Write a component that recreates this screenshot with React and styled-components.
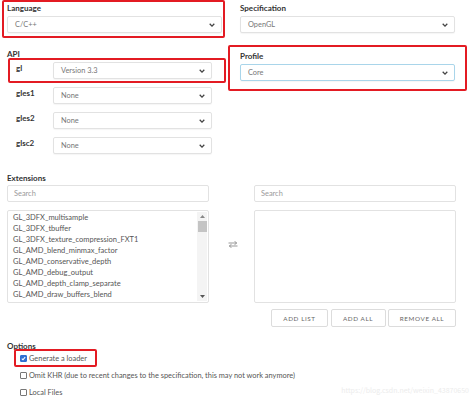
import styled, { createGlobalStyle } from 'styled-components';

const GlobalStyle = createGlobalStyle`
  html, body {
    margin: 0;
    padding: 0;
    background: #fff;
  }
  body {
    font-family: Lato, "Open Sans", sans-serif;
    color: #333;
    width: 474px;
    height: 399px;
    overflow: hidden;
  }
  * { box-sizing: border-box; }
`;

const RED = '#e31b23';

const Page = styled.div`
  position: relative;
  width: 474px;
  height: 399px;
  padding: 3px 0 0 7px;
`;

const TopGrid = styled.div`
  display: grid;
  grid-template-columns: 215px 215px;
  column-gap: 18px;
  align-items: start;
`;

const Column = styled.div`
  display: flex;
  flex-direction: column;
`;

// red annotation frame drawn over a block
const Highlight = styled.div`
  position: relative;
  margin-top: ${p => p.$mt || 0}px;
  ${p => p.$w && `width: ${p.$w}px;`}
  &::after {
    content: '';
    position: absolute;
    top: ${p => p.$t}px;
    left: ${p => p.$l}px;
    right: ${p => p.$r}px;
    bottom: ${p => p.$b}px;
    border: 2.5px solid ${RED};
    border-radius: 2px;
    pointer-events: none;
  }
`;

const Group = styled.div`
  display: flex;
  flex-direction: column;
  margin-top: ${p => p.$mt || 0}px;
`;

const Label = styled.div`
  font-size: 8px;
  line-height: 10px;
  height: 10px;
  font-weight: 700;
  color: #333;
`;

const SelectBox = styled.div`
  display: flex;
  align-items: center;
  justify-content: space-between;
  margin-top: ${p => p.$mt ?? 3}px;
  height: 17px;
  width: ${p => p.$w ? `${p.$w}px` : '100%'};
  padding: 0 6px 0 7px;
  border: 1px solid ${p => p.$focus ? '#a9d5ea' : '#e2e2e2'};
  border-radius: 2px;
  background: #fff;
  box-shadow: 0 1px 1px rgba(0,0,0,0.04);
  font-size: 7.4px;
  color: #777;
`;

const Chevron = () => (
  <svg width="6" height="4" viewBox="0 0 6 4">
    <path d="M0.7 0.8 L3 3.1 L5.3 0.8" fill="none" stroke="#444" strokeWidth="1.3" />
  </svg>
);

const Select = ({ value, ...rest }) => (
  <SelectBox {...rest}>
    <span>{value}</span>
    <Chevron />
  </SelectBox>
);

const ApiRows = styled.div`
  display: flex;
  flex-direction: column;
  gap: 7px;
  margin-top: 3px;
`;

const ApiRow = styled.div`
  display: flex;
  align-items: flex-start;
  height: 18px;
  padding-left: 9px;
`;

const RowLabel = styled.div`
  width: 37px;
  font-size: 8px;
  font-weight: 700;
  line-height: 10px;
  padding-top: 1px;
  color: #333;
`;

const ExtGrid = styled.div`
  display: grid;
  grid-template-columns: 202px 45px 202px;
  margin-top: 2px;
`;

const Search = styled.div`
  height: 17px;
  border: 1px solid #e2e2e2;
  border-radius: 2px;
  padding-left: 6px;
  font-size: 7.4px;
  line-height: 15px;
  color: #9a9a9a;
`;

const ListBox = styled.div`
  display: flex;
  margin-top: 8px;
  height: 93px;
  border: 1px solid #e2e2e2;
  border-radius: 2px;
  overflow: hidden;
`;

const Items = styled.div`
  flex: 1;
  padding-top: 1px;
  overflow: hidden;
`;

const Item = styled.div`
  font-size: 7.5px;
  line-height: 11px;
  padding-left: 5px;
  color: #555;
  white-space: nowrap;
  overflow: hidden;
`;

const ScrollTrack = styled.div`
  width: 10px;
  display: flex;
  flex-direction: column;
  align-items: center;
  background: #f4f4f4;
  margin: 1px 1px 1px 0;
`;

const ScrollArrow = styled.div`
  height: 9px;
  display: flex;
  align-items: center;
  justify-content: center;
`;

const Thumb = styled.div`
  width: 9px;
  height: 11px;
  background: #c4c4c4;
`;

const Spacer = styled.div`
  flex: 1;
`;

const Middle = styled.div`
  display: flex;
  align-items: flex-start;
  justify-content: center;
  padding-top: 56px;
  padding-left: 2px;
`;

const ButtonRow = styled.div`
  display: flex;
  justify-content: flex-end;
  gap: 2.5px;
  margin-top: 6px;
  width: 449px;
`;

const Button = styled.div`
  width: ${p => p.$w}px;
  height: 18px;
  border: 1px solid #dcdcdc;
  border-radius: 2px;
  display: flex;
  align-items: center;
  justify-content: center;
  font-size: 6.3px;
  letter-spacing: 0.6px;
  color: #666;
  text-transform: uppercase;
`;

const Options = styled.div`
  display: flex;
  flex-direction: column;
  align-items: flex-start;
  gap: 5px;
  margin-top: 1px;
`;

const OptionRow = styled.div`
  display: flex;
  align-items: center;
  height: 12px;
  padding-left: 13px;
  font-size: 7.4px;
  color: #555;
  white-space: nowrap;
`;

const Box = styled.span`
  width: 7px;
  height: 7px;
  margin-right: 2px;
  border-radius: 1px;
  border: 1px solid ${p => p.$checked ? '#2f6fd1' : '#777'};
  background: ${p => p.$checked ? '#2f6fd1' : '#fff'};
  display: inline-flex;
  align-items: center;
  justify-content: center;
`;

const Watermark = styled.div`
  position: absolute;
  right: 5px;
  bottom: 4px;
  font-size: 7px;
  color: #ececec;
  font-family: "Noto Sans CJK SC", sans-serif;
`;

const Checkbox = ({ checked }) => (
  <Box $checked={checked}>
    {checked && (
      <svg width="5" height="5" viewBox="0 0 5 5">
        <path d="M0.8 2.6 L2 3.8 L4.2 1.2" fill="none" stroke="#fff" strokeWidth="1.1" />
      </svg>
    )}
  </Box>
);

const extensions = [
  'GL_3DFX_multisample',
  'GL_3DFX_tbuffer',
  'GL_3DFX_texture_compression_FXT1',
  'GL_AMD_blend_minmax_factor',
  'GL_AMD_conservative_depth',
  'GL_AMD_debug_output',
  'GL_AMD_depth_clamp_separate',
  'GL_AMD_draw_buffers_blend',
  'GL_AMD_framebuffer_multisample_advanced',
];

const apis = [
  { name: 'gles1', value: 'None' },
  { name: 'gles2', value: 'None' },
  { name: 'glsc2', value: 'None' },
];

export default function App() {
  return (
    <>
      <GlobalStyle />
      <Page>
        <TopGrid>
          <Column>
            <Highlight $t={-3} $l={-5} $r={-3} $b={-5}>
              <Group>
                <Label>Language</Label>
                <Select value="C/C++" />
              </Group>
            </Highlight>

            <Group $mt={16}>
              <Label>API</Label>
              <ApiRows>
                <Highlight $t={-4} $l={1} $r={-4} $b={-3}>
                  <ApiRow>
                    <RowLabel>gl</RowLabel>
                    <Select value="Version 3.3" $w={159} $mt={0} />
                  </ApiRow>
                </Highlight>
                {apis.map(a => (
                  <ApiRow key={a.name}>
                    <RowLabel>{a.name}</RowLabel>
                    <Select value={a.value} $w={159} $mt={0} />
                  </ApiRow>
                ))}
              </ApiRows>
            </Group>
          </Column>

          <Column>
            <Group>
              <Label>Specification</Label>
              <Select value="OpenGL" />
            </Group>

            <Highlight $mt={18} $t={-6} $l={-12} $r={-12} $b={-10}>
              <Group>
                <Label>Profile</Label>
                <Select value="Core" $focus />
              </Group>
            </Highlight>
          </Column>
        </TopGrid>

        <Group $mt={18}>
          <Label>Extensions</Label>
          <ExtGrid>
            <div>
              <Search>Search</Search>
              <ListBox>
                <Items>
                  {extensions.map(e => <Item key={e}>{e}</Item>)}
                </Items>
                <ScrollTrack>
                  <ScrollArrow>
                    <svg width="5" height="3" viewBox="0 0 5 3"><path d="M0 3 L2.5 0 L5 3 Z" fill="#888" /></svg>
                  </ScrollArrow>
                  <Thumb />
                  <Spacer />
                  <ScrollArrow>
                    <svg width="5" height="3" viewBox="0 0 5 3"><path d="M0 0 L2.5 3 L5 0 Z" fill="#555" /></svg>
                  </ScrollArrow>
                </ScrollTrack>
              </ListBox>
            </div>
            <Middle>
              <svg width="10" height="7" viewBox="0 0 10 7">
                <path d="M0.5 2 H8.5 M6.5 0.3 L8.8 2 L6.5 3.7" fill="none" stroke="#999" strokeWidth="1" />
                <path d="M9.5 5 H1.5 M3.5 3.3 L1.2 5 L3.5 6.7" fill="none" stroke="#999" strokeWidth="1" />
              </svg>
            </Middle>
            <div>
              <Search>Search</Search>
              <ListBox />
            </div>
          </ExtGrid>
          <ButtonRow>
            <Button $w={57}>Add list</Button>
            <Button $w={55}>Add all</Button>
            <Button $w={68}>Remove all</Button>
          </ButtonRow>
        </Group>

        <Group $mt={14}>
          <Label>Options</Label>
          <Options>
            <Highlight $w={90} $t={-3} $l={7} $r={0} $b={-3}>
              <OptionRow>
                <Checkbox checked />
                Generate a loader
              </OptionRow>
            </Highlight>
            <OptionRow>
              <Checkbox />
              Omit KHR (due to recent changes to the specification, this may not work anymore)
            </OptionRow>
            <OptionRow>
              <Checkbox />
              Local Files
            </OptionRow>
          </Options>
        </Group>

        <Watermark>https://blog.csdn.net/weixin_43870650</Watermark>
      </Page>
    </>
  );
}
